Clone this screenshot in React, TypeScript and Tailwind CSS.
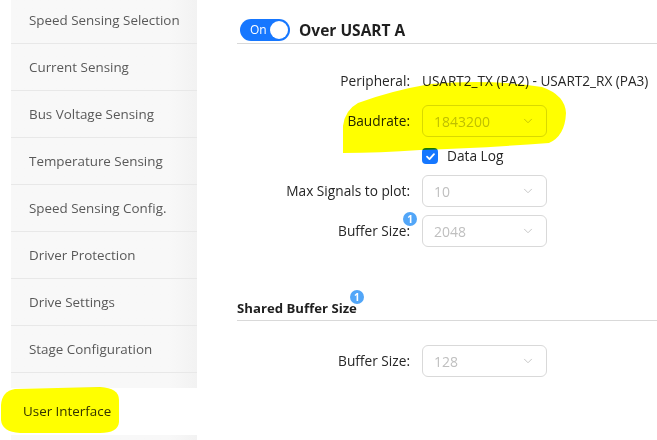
import React from "react";
import { ChevronDown } from "lucide-react";

const sideItems = [
  "Speed Sensing Selection",
  "Current Sensing",
  "Bus Voltage Sensing",
  "Temperature Sensing",
  "Speed Sensing Config.",
  "Driver Protection",
  "Drive Settings",
  "Stage Configuration",
];

function Badge() {
  return (
    <span className="absolute right-[-7px] top-[-9px] w-[14px] h-[14px] rounded-full bg-[#52a6f8] text-white text-[10px] font-bold leading-none flex items-center justify-center">
      1
    </span>
  );
}

function Select({ value }: { value: string }) {
  return (
    <div className="w-[125px] h-[32px] border border-[#d9d9d9] rounded-[6px] bg-white px-[11px] flex items-center justify-between text-[14px] text-[#bfbfbf]">
      <span>{value}</span>
      <ChevronDown size={14} strokeWidth={1.5} color="#bfbfbf" />
    </div>
  );
}

function Row({
  label,
  badge,
  children,
  className,
}: {
  label: string;
  badge?: boolean;
  children: React.ReactNode;
  className?: string;
}) {
  return (
    <div className={"flex items-center h-[32px] " + (className ?? "")}>
      <div className="w-[173px] text-right text-[13.7px] text-[#262626]">
        <span className="relative">
          {label}
          {badge && <Badge />}
        </span>
      </div>
      <div className="ml-[12px] flex items-center">{children}</div>
    </div>
  );
}

export default function App() {
  return (
    <div className="relative w-[657px] h-[440px] overflow-hidden bg-white flex font-['Open_Sans',sans-serif]">
      <aside className="ml-[11px] w-[186px] h-full flex flex-col bg-gradient-to-r from-[#f8f8f8] from-85% to-[#f2f2f2]">
        <div className="-mt-[3px] flex flex-col">
          {sideItems.map((t) => (
            <div
              key={t}
              className="h-[47px] shrink-0 border-b border-[#e8e8e8] flex items-center pl-[18px] text-[13.4px] text-[#595959]"
            >
              {t}
            </div>
          ))}
          <div className="h-[15px] shrink-0" />
          <div className="h-[47px] shrink-0 bg-white flex items-center pl-[12px] text-[13.4px] text-[#333]">
            User Interface
          </div>
        </div>
      </aside>

      <main className="ml-[40px] flex-1 flex flex-col">
        <div className="h-[44px] shrink-0 border-b border-[#d9d9d9] flex items-end pb-[2px]">
          <div className="ml-[3px] relative w-[50px] h-[22px] rounded-full bg-[#1677ff] flex items-center">
            <span className="ml-[10px] text-[12px] text-white leading-none">On</span>
            <span className="absolute right-[2px] top-[2px] w-[18px] h-[18px] rounded-full bg-white" />
          </div>
          <span className="ml-[9px] text-[15.5px] font-bold text-[#1f1f1f] leading-[22px]">Over USART A</span>
        </div>

        <Row label="Peripheral:" className="mt-[21px]">
          <span className="text-[13.6px] text-[#262626] whitespace-nowrap">USART2_TX (PA2) - USART2_RX (PA3)</span>
        </Row>
        <Row label="Baudrate:" className="mt-[8px]">
          <Select value="1843200" />
        </Row>
        <div className="mt-[8px] h-[22px] flex items-center pl-[185px]">
          <span className="w-[16px] h-[16px] rounded-[4px] bg-[#1677ff] flex items-center justify-center">
            <svg width="11" height="11" viewBox="0 0 12 12" fill="none">
              <path d="M2.2 6.2 L4.9 8.8 L9.8 3.4" stroke="white" strokeWidth="2" strokeLinecap="round" strokeLinejoin="round" />
            </svg>
          </span>
          <span className="ml-[9px] text-[13.7px] text-[#262626]">Data Log</span>
        </div>
        <Row label="Max Signals to plot:" className="mt-[8px]">
          <Select value="10" />
        </Row>
        <Row label="Buffer Size:" badge className="mt-[8px]">
          <Select value="2048" />
        </Row>

        <div className="mt-[50px] h-[24px] shrink-0 border-b border-[#d9d9d9] flex items-center">
          <span className="relative text-[13.2px] font-bold text-[#1f1f1f]">
            Shared Buffer Size
            <Badge />
          </span>
        </div>
        <Row label="Buffer Size:" className="mt-[24px]">
          <Select value="128" />
        </Row>
      </main>

      <svg
        className="absolute left-0 top-0 pointer-events-none mix-blend-multiply"
        width="657"
        height="440"
        viewBox="0 0 657 440"
      >
        <path
          d="M343,153 L343,126 Q345,110 358,103 Q390,91 430,84 Q490,79 542,87 Q565,95 566,113 Q565,136 549,143 Q480,148 420,150 Q380,153 343,153 Z"
          fill="#ffff00"
        />
        <path
          d="M1,405 Q2,391 15,389 L100,387 Q119,388 119,400 L119,422 Q118,433 100,433 L20,433 Q2,432 1,420 Z"
          fill="#ffff00"
        />
      </svg>
    </div>
  );
}
